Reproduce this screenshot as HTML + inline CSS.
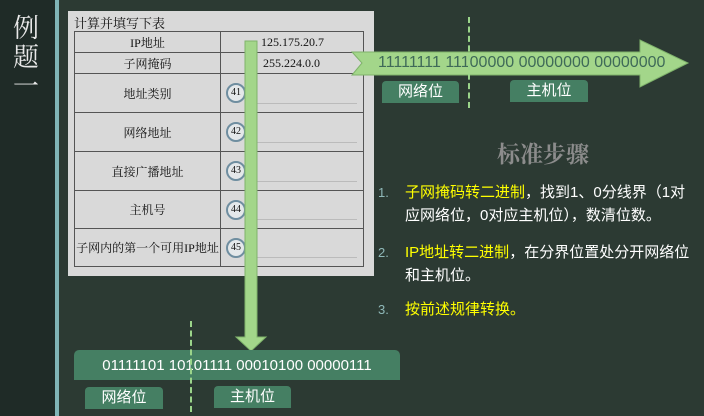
<!DOCTYPE html>
<html><head><meta charset="utf-8"><style>
*{margin:0;padding:0;box-sizing:border-box}
body{width:704px;height:416px;overflow:hidden;background:#2c3a33;position:relative;font-family:"Liberation Sans","Noto Sans CJK SC",sans-serif}
.a{position:absolute}
.side{left:0;top:0;width:55px;height:416px;background:#1f2b27}
.vl{left:55px;top:0;width:4px;height:416px;background:#80b4b6}
.title{left:6px;top:12px;width:40px;color:#e8e8e8;font-family:"Noto Serif CJK SC",serif;font-size:26px;line-height:29px;text-align:center}
.panel{left:68px;top:11px;width:306px;height:265px;background:#d9d9d9}
.ptit{left:74px;top:13px;font-size:13px;color:#111;font-family:"Liberation Serif","Noto Serif CJK SC",serif}
table{position:absolute;left:74px;top:31px;width:290px;border-collapse:collapse;font-family:"Liberation Serif","Noto Serif CJK SC",serif;font-size:12px;color:#111}
td{border:1px solid #555;text-align:center;padding:0}
td.r{text-align:left;position:relative}
.circ{position:absolute;left:5px;top:50%;margin-top:-10px;width:20px;height:20px;border:2px solid #6f8ea0;border-radius:50%;background:#e4e8ea;font-size:10px;line-height:16px;text-align:center}
.ul{position:absolute;left:28px;right:6px;bottom:8px;height:1px;background:#bbb}
.lab{background:#457f63;color:#fff;font-size:15px;text-align:center;border-radius:4px 4px 0 0;line-height:22px}
.dash{border-left:2px dashed #9bd58a;width:0}
.li{left:378px;color:#fff;font-size:15px;line-height:23px}
.li b{font-weight:normal;position:absolute;left:0;color:#8fb8b8;font-size:13px}
.li span{display:block;margin-left:27px;width:290px}
.y{color:#ffff00}
</style></head><body>
<div class="a side"></div><div class="a vl"></div>
<div class="a title">例<br>题<br>一</div>
<div class="a panel"></div>
<div class="a ptit">计算并填写下表</div>
<table>
<tr style="height:21px"><td style="width:146px">IP地址</td><td class="r" style="padding-left:40px">125.175.20.7</td></tr>
<tr style="height:21px"><td>子网掩码</td><td class="r" style="padding-left:42px">255.224.0.0</td></tr>
<tr style="height:39px"><td>地址类别</td><td class="r"><div class="circ">41</div><div class="ul"></div></td></tr>
<tr style="height:39px"><td>网络地址</td><td class="r"><div class="circ">42</div><div class="ul"></div></td></tr>
<tr style="height:39px"><td>直接广播地址</td><td class="r"><div class="circ">43</div><div class="ul"></div></td></tr>
<tr style="height:38px"><td>主机号</td><td class="r"><div class="circ">44</div><div class="ul"></div></td></tr>
<tr style="height:38px"><td>子网内的第一个可用IP地址</td><td class="r"><div class="circ">45</div><div class="ul"></div></td></tr>
</table>
<svg class="a" style="left:0;top:0" width="704" height="416">
<polygon points="352,52 640,52 640,40 688,63 640,87 640,75 352,75 362,63" fill="#a3d68a" stroke="#7fb36b" stroke-width="1"/>
<polygon points="245,41 257,41 257,337 266,337 251,351 236,337 245,337" fill="#a3d68a" stroke="#7fb36b" stroke-width="1"/>
</svg>
<div class="a" style="left:378px;top:53px;font-size:16px;color:#3f6a58;line-height:20px">11111111 11100000 00000000 00000000</div>
<div class="a lab" style="left:382px;top:81px;width:77px">网络位</div>
<div class="a lab" style="left:510px;top:80px;width:78px">主机位</div>
<div class="a dash" style="left:468px;top:17px;height:91px"></div>
<div class="a" style="left:443px;top:136px;width:200px;text-align:center;font-family:'Noto Serif CJK SC',serif;font-weight:bold;font-size:23px;color:#8c8c8c">标准步骤</div>
<div class="a li" style="top:181px"><b>1.</b><span><i class="y" style="font-style:normal">子网掩码转二进制</i>，找到1、0分线界（1对应网络位，0对应主机位），数清位数。</span></div>
<div class="a li" style="top:241px"><b>2.</b><span><i class="y" style="font-style:normal">IP地址转二进制</i>，在分界位置处分开网络位和主机位。</span></div>
<div class="a li" style="top:298px"><b>3.</b><span class="y">按前述规律转换。</span></div>
<div class="a" style="left:74px;top:350px;width:326px;height:30px;background:#457f63;border-radius:5px 5px 0 0;color:#fff;font-size:15px;text-align:center;line-height:32px">01111101 10101111 00010100 00000111</div>
<div class="a lab" style="left:85px;top:387px;width:78px">网络位</div>
<div class="a lab" style="left:214px;top:386px;width:77px">主机位</div>
<div class="a dash" style="left:190px;top:321px;height:91px"></div>
</body></html>
